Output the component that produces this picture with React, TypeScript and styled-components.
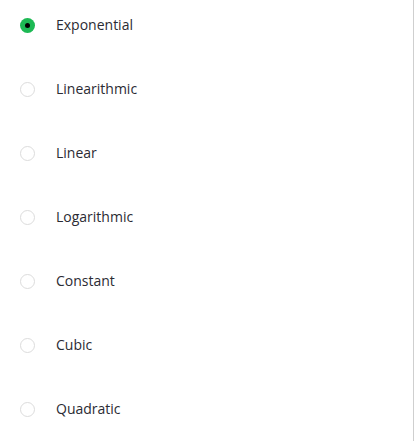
import React, { useState } from "react";
import styled, { createGlobalStyle } from "styled-components";

const GlobalStyle = createGlobalStyle`
    html, body {
        margin: 0;
        padding: 0;
        background: #ffffff;
    }
`

const Panel = styled.div`
    box-sizing: border-box;
    width: 414px;
    height: 441px;
    border-right: 1px solid #cfcfcf;
    display: flex;
    flex-direction: column;
    gap: 14px;
    font-family: "Open Sans", "Noto Sans", sans-serif;
`

const Option = styled.label`
    display: flex;
    align-items: center;
    height: 50px;
    padding-left: 20px;
    cursor: pointer;
`

const Radio = styled.span<{ checked: boolean }>`
    box-sizing: border-box;
    width: 15px;
    height: 15px;
    border-radius: 50%;
    flex-shrink: 0;
    display: flex;
    align-items: center;
    justify-content: center;
    margin-top: 1px;
    background: ${({ checked }) => checked ? "#1db954" : "#ffffff"};
    border: ${({ checked }) => checked ? "none" : "1.5px solid #dcdcdc"};

    &::after {
        content: "";
        display: ${({ checked }) => checked ? "block" : "none"};
        width: 5px;
        height: 5px;
        border-radius: 50%;
        background: #000000;
    }
`

const Label = styled.span`
    margin-left: 21px;
    margin-bottom: 2px;
    font-size: 14px;
    color: #2b2b33;
`

const options = [
    "Exponential",
    "Linearithmic",
    "Linear",
    "Logarithmic",
    "Constant",
    "Cubic",
    "Quadratic",
]

const App = () => {
    const [selected, setSelected] = useState("Exponential")

    return (
        <>
            <GlobalStyle />
            <Panel>
                {options.map(option => (
                    <Option key={option} onClick={() => setSelected(option)}>
                        <Radio checked={selected === option} />
                        <Label>{option}</Label>
                    </Option>
                ))}
            </Panel>
        </>
    )
}

export default App
